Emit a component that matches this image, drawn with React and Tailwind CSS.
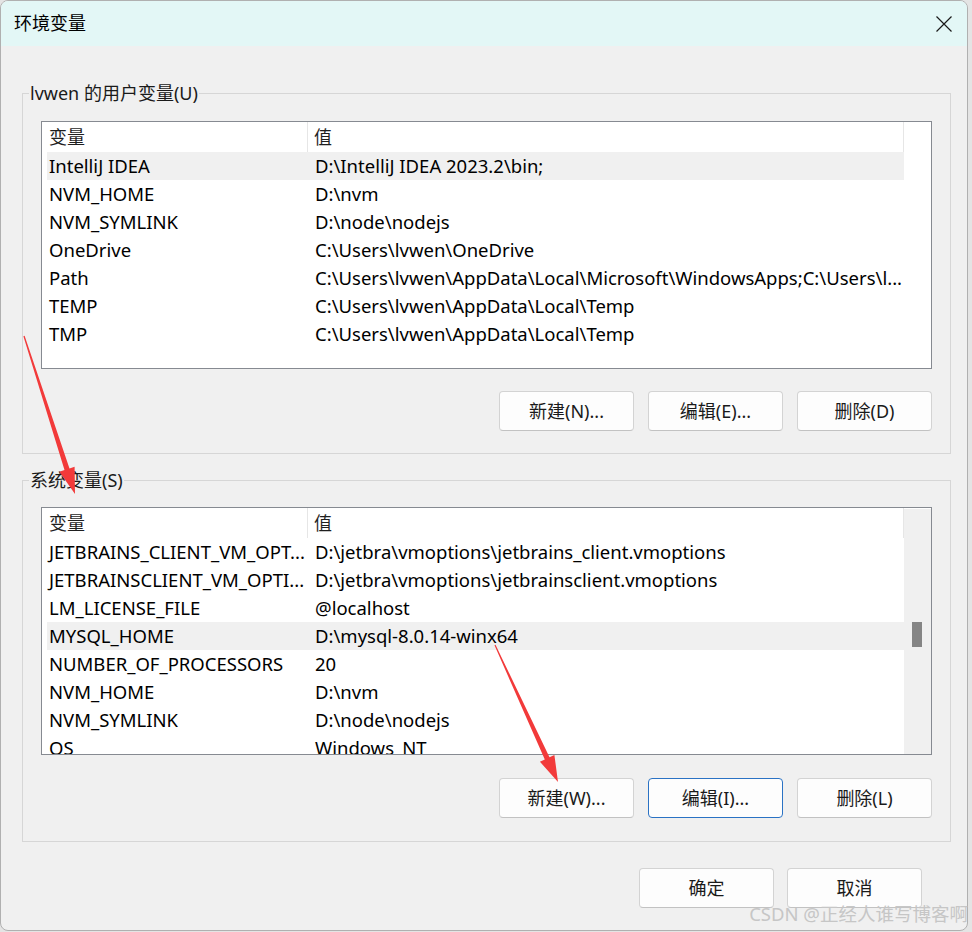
import React from "react";

const userVars = [
  ["IntelliJ IDEA", "D:\\IntelliJ IDEA 2023.2\\bin;"],
  ["NVM_HOME", "D:\\nvm"],
  ["NVM_SYMLINK", "D:\\node\\nodejs"],
  ["OneDrive", "C:\\Users\\lvwen\\OneDrive"],
  ["Path", "C:\\Users\\lvwen\\AppData\\Local\\Microsoft\\WindowsApps;C:\\Users\\l..."],
  ["TEMP", "C:\\Users\\lvwen\\AppData\\Local\\Temp"],
  ["TMP", "C:\\Users\\lvwen\\AppData\\Local\\Temp"],
];

const systemVars = [
  ["JETBRAINS_CLIENT_VM_OPT...", "D:\\jetbra\\vmoptions\\jetbrains_client.vmoptions"],
  ["JETBRAINSCLIENT_VM_OPTI...", "D:\\jetbra\\vmoptions\\jetbrainsclient.vmoptions"],
  ["LM_LICENSE_FILE", "@localhost"],
  ["MYSQL_HOME", "D:\\mysql-8.0.14-winx64"],
  ["NUMBER_OF_PROCESSORS", "20"],
  ["NVM_HOME", "D:\\nvm"],
  ["NVM_SYMLINK", "D:\\node\\nodejs"],
  ["OS", "Windows_NT"],
];

// tapered red annotation arrow
const arrowPoints = (x1, y1, x2, y2, headLen = 26, headW = 8, tail = 0.6, neck = 2.6) => {
  const dx = x2 - x1;
  const dy = y2 - y1;
  const len = Math.sqrt(dx * dx + dy * dy);
  const ux = dx / len;
  const uy = dy / len;
  const nx = -uy;
  const ny = ux;
  const bx = x2 - ux * headLen;
  const by = y2 - uy * headLen;
  const pts = [
    [x1 + nx * tail, y1 + ny * tail],
    [bx + nx * neck, by + ny * neck],
    [bx + nx * headW, by + ny * headW],
    [x2, y2],
    [bx - nx * headW, by - ny * headW],
    [bx - nx * neck, by - ny * neck],
    [x1 - nx * tail, y1 - ny * tail],
  ];
  return pts.map((p) => p[0].toFixed(1) + "," + p[1].toFixed(1)).join(" ");
};

const Button = ({ children, focused }) => (
  <button
    className={
      "h-[40px] w-[135px] rounded-[4px] border bg-[#fdfdfd] text-[18px] text-[#1a1a1a] " +
      (focused ? "border-[#2a72c4]" : "border-[#d3d3d3] border-b-[#c2c2c2]")
    }
  >
    {children}
  </button>
);

const VarList = ({ rows, selected, scroll }) => (
  <div className="flex h-[248px] w-[891px] overflow-hidden border border-[#868a91] bg-white">
    <div className="flex w-[862px] flex-col">
      <div className="flex h-[30px] shrink-0 items-center text-[18px] text-[#1f1f1f]">
        <div className="flex h-full w-[266px] items-center border-r border-[#e6e6e6] pl-[7px]">变量</div>
        <div className="flex h-full flex-1 items-center border-r border-[#e6e6e6] pl-[6px]">值</div>
      </div>
      <div className="flex flex-col pl-[5px]">
        {rows.map(([name, value], i) => (
          <div
            key={name + i}
            className={
              "flex h-[28px] shrink-0 items-center whitespace-nowrap text-[18.5px] text-black " +
              (i === selected ? "bg-[#f0f0f0]" : "")
            }
          >
            <div className="w-[261px] overflow-hidden pl-[2px]">{name}</div>
            <div className="flex-1 overflow-hidden pl-[7px]">{value}</div>
          </div>
        ))}
      </div>
    </div>
    <div className={"mt-[1px] w-[27px] " + (scroll ? "bg-[#f0f0f0]" : "bg-white")}>
      {scroll && <div className="ml-[8px] mt-[113px] h-[25px] w-[10px] bg-[#858585]" />}
    </div>
  </div>
);

const GroupBox = ({ label, children, className }) => (
  <fieldset className={"ml-[21px] w-[929px] border border-[#d6d6d6] pl-[18px] pr-[18px] " + className}>
    <legend className="ml-[-12px] px-[1px] text-[18px] leading-[24px] text-[#1a1a1a]">{label}</legend>
    {children}
  </fieldset>
);

export default function App() {
  return (
    <div className="relative h-[932px] w-[972px] overflow-hidden bg-[#e4e4e4] font-['Noto_Sans','Noto_Sans_CJK_SC',sans-serif]">
      <div className="flex h-[931px] w-[968px] flex-col overflow-hidden rounded-[8px] border border-[#b0b0b0] bg-[#f0f0f0]">
        <div className="flex h-[45px] shrink-0 items-center justify-between bg-[#e3f7f6] pl-[13px] pr-[14px]">
          <span className="text-[18px] text-black">环境变量</span>
          <svg width="16" height="16" viewBox="0 0 16 16" className="mr-[1px]">
            <path d="M0.5 0.5 L15.5 15.5 M15.5 0.5 L0.5 15.5" stroke="#1a1a1a" strokeWidth="1.2" fill="none" />
          </svg>
        </div>

        <GroupBox label="lvwen 的用户变量(U)" className="mt-[35px] pt-[16px] pb-[22px]">
          <VarList rows={userVars} selected={0} />
          <div className="mt-[22px] flex justify-end gap-[14px]">
            <Button>新建(N)...</Button>
            <Button>编辑(E)...</Button>
            <Button>删除(D)</Button>
          </div>
        </GroupBox>

        <GroupBox label="系统变量(S)" className="mt-[14px] pt-[15px] pb-[23px]">
          <VarList rows={systemVars} selected={3} scroll />
          <div className="mt-[23px] flex justify-end gap-[14px]">
            <Button>新建(W)...</Button>
            <Button focused>编辑(I)...</Button>
            <Button>删除(L)</Button>
          </div>
        </GroupBox>

        <div className="mt-[26px] flex justify-end gap-[13px] pr-[45px]">
          <Button>确定</Button>
          <Button>取消</Button>
        </div>
      </div>

      <svg className="pointer-events-none absolute left-0 top-0" width="972" height="932">
        <polygon points={arrowPoints(24, 336, 75, 494)} fill="#f23a3a" />
        <polygon points={arrowPoints(495, 645, 558, 782)} fill="#f23a3a" />
      </svg>

      <div className="pointer-events-none absolute bottom-[4px] right-[4px] text-[18.5px] text-[#c6c6c6]">
        CSDN @正经人谁写博客啊
      </div>
    </div>
  );
}
